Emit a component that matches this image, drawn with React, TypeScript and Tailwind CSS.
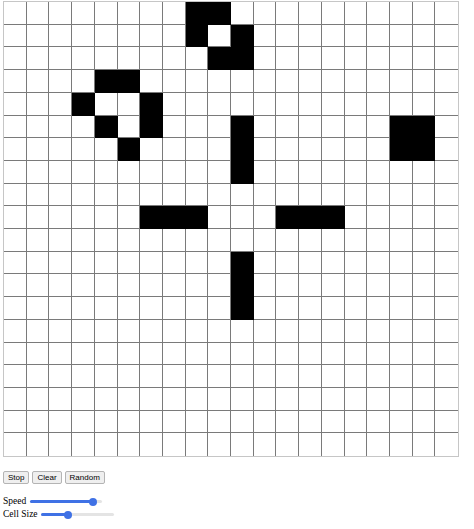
import clsx from "clsx";

const SIZE = 20;

// live cells as "row,col"
const LIVE = new Set([
  "0,8", "0,9", "1,8", "1,10", "2,9", "2,10",
  "3,4", "3,5", "4,3", "4,6", "5,4", "5,6", "6,5",
  "5,10", "6,10", "7,10",
  "9,6", "9,7", "9,8", "9,12", "9,13", "9,14",
  "11,10", "12,10", "13,10",
  "5,17", "5,18", "6,17", "6,18",
]);

function Slider({ width, thumb }: { width: number; thumb: number }) {
  // thumb = center of the knob in px from the left of the track
  return (
    <div className="relative h-[8px]" style={{ width }}>
      <div className="absolute left-0 right-0 top-[2.5px] h-[3px] rounded-full bg-[#e4e4e4]" />
      <div className="absolute left-0 top-[2.5px] h-[3px] rounded-full bg-[#3f71e5]" style={{ width: thumb }} />
      <div className="absolute top-0 w-[8px] h-[8px] rounded-full bg-[#3f71e5]" style={{ left: thumb - 4 }} />
    </div>
  );
}

export default function App() {
  const cells = [];
  for (let r = 0; r < SIZE; r++) {
    for (let c = 0; c < SIZE; c++) {
      const alive = LIVE.has(`${r},${c}`);
      cells.push(
        <div
          key={`${r}-${c}`}
          className={clsx(
            c < SIZE - 1 && "border-r",
            r < SIZE - 1 && "border-b",
            alive ? "bg-black border-black" : "bg-white border-[#7a7a7a]"
          )}
        />
      );
    }
  }

  return (
    <div className="min-h-screen bg-white pt-px pl-[3px] text-black">
      <div className="grid grid-cols-[repeat(20,1fr)] grid-rows-[repeat(20,1fr)] w-[456px] h-[456px] border border-[#c6c6c6]">
        {cells}
      </div>

      {/* Controls */}
      <div className="mt-[14px] flex gap-[3px] font-['Liberation_Sans',Arial,sans-serif]">
        {["Stop", "Clear", "Random"].map((label) => (
          <button
            key={label}
            className="h-[13px] px-[4px] text-[8px] leading-none bg-[#efefef] border border-[#b4b4b4] rounded-[2px]"
          >
            {label}
          </button>
        ))}
      </div>

      <div className="mt-[11px] font-['Liberation_Serif','Times_New_Roman',serif] text-[9.5px] leading-[13px]">
        <div className="flex items-center">
          <span>Speed</span>
          <div className="ml-[4px]">
            <Slider width={72} thumb={63} />
          </div>
        </div>
        <div className="flex items-center">
          <span>Cell Size</span>
          <div className="ml-[3px]">
            <Slider width={73} thumb={27} />
          </div>
        </div>
      </div>
    </div>
  );
}
